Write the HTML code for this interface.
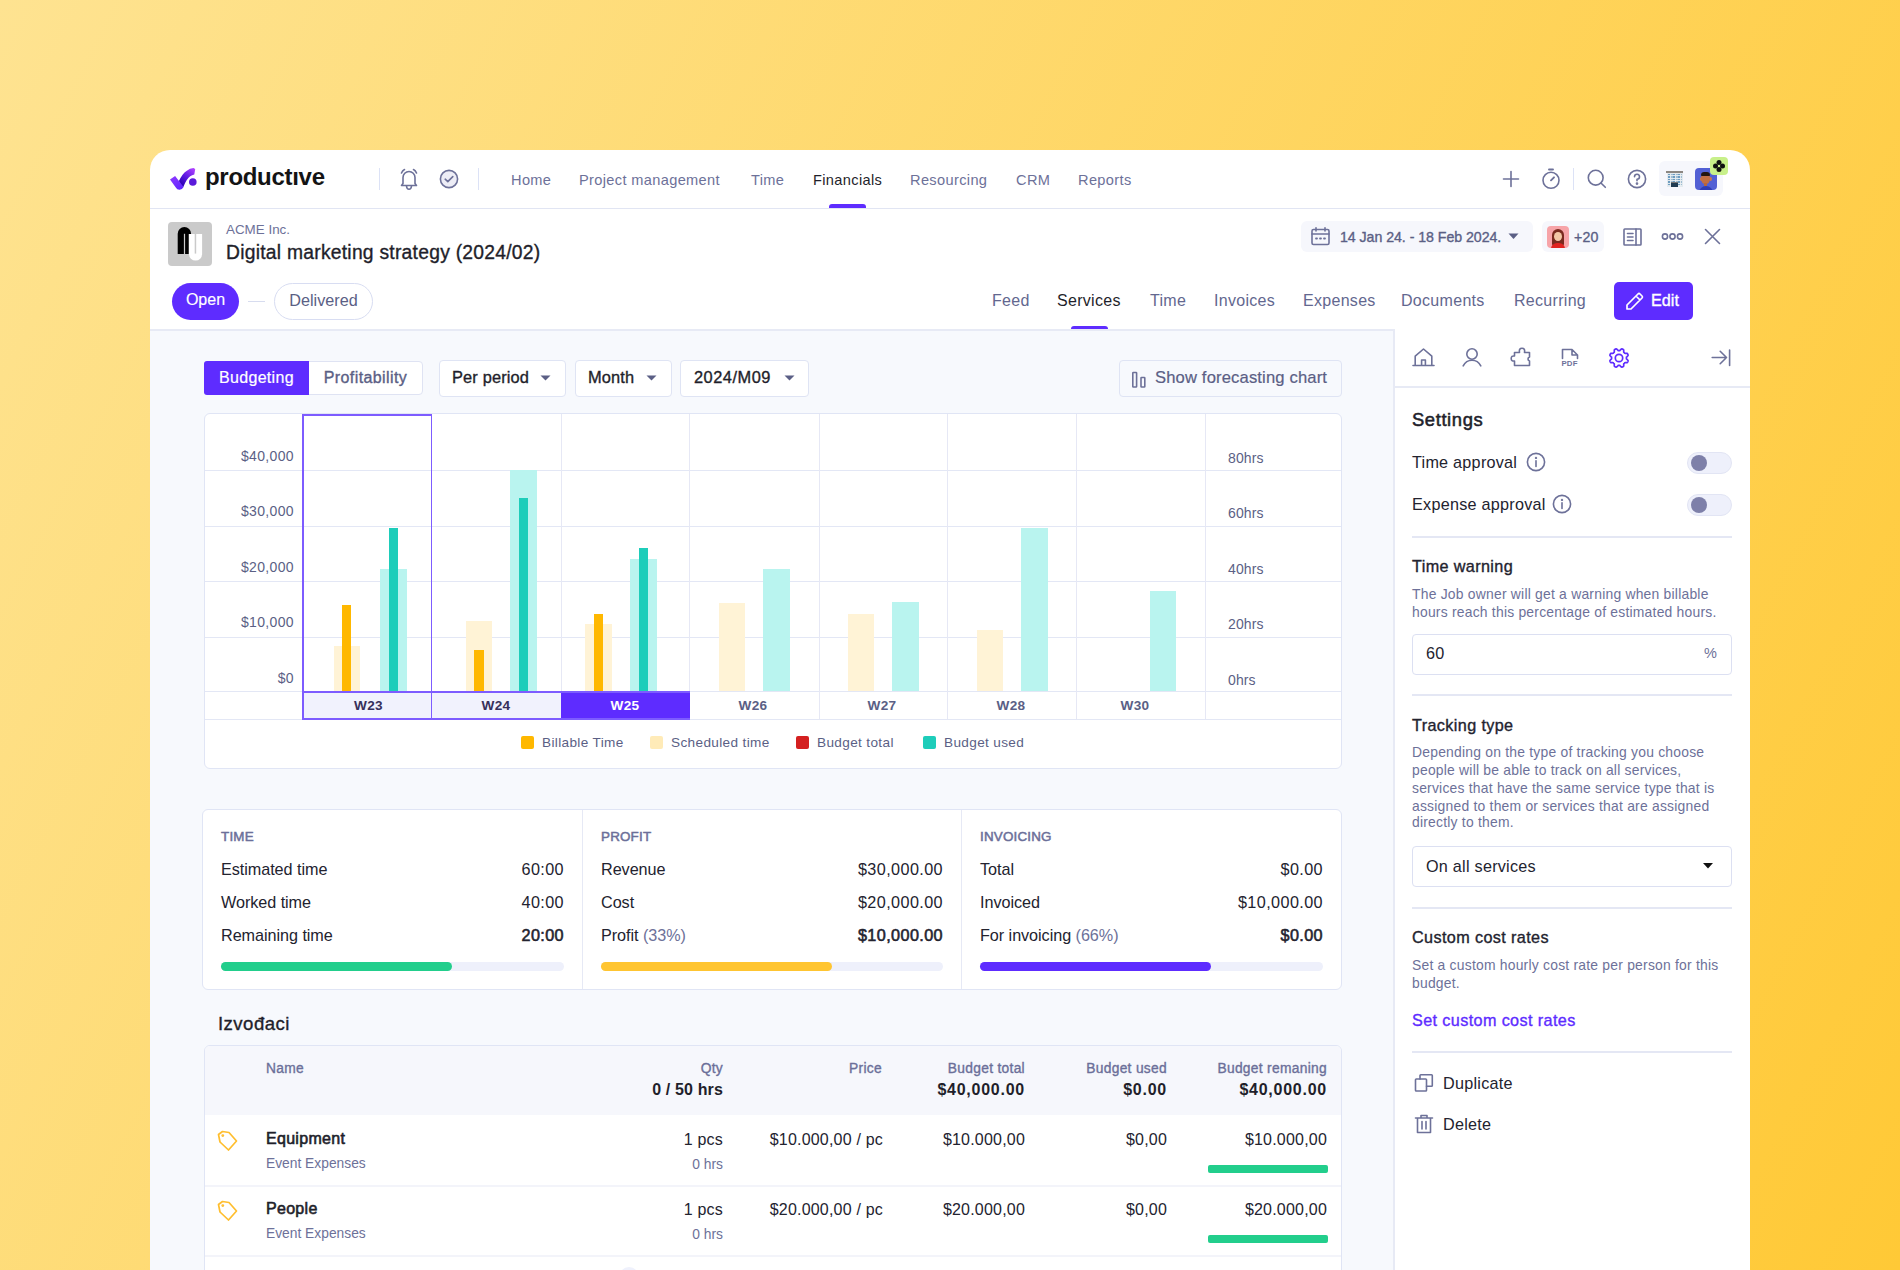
<!DOCTYPE html>
<html><head><meta charset="utf-8">
<style>
*{box-sizing:border-box;margin:0;padding:0}
html,body{width:1900px;height:1270px;overflow:hidden}
body{position:relative;font-family:"Liberation Sans",sans-serif;background:linear-gradient(117deg,#FEE391 0%,#FFC936 100%);color:#23232f}
.a{position:absolute}
.t{position:absolute;white-space:nowrap;line-height:20px}
.win{position:absolute;left:150px;top:150px;width:1600px;height:1140px;background:#fff;border-radius:20px 20px 0 0;overflow:hidden}
.nav{color:#6D7199;font-size:14.6px;letter-spacing:0.35px}

.g{color:#6D7199}
.line{position:absolute;background:#E4E8F4}
svg{position:absolute;overflow:visible}
.ic{fill:none;stroke:#6D7199;stroke-width:1.6;stroke-linecap:round;stroke-linejoin:round}
.md{-webkit-text-stroke:0.35px currentColor}
.tab{color:#63678F;font-size:16px;letter-spacing:0.3px;margin-top:1px}
.ylab{color:#5B5F85;font-size:14px;margin-top:-0.6px;letter-spacing:0.35px}
.wk{font-size:13.6px;font-weight:bold;letter-spacing:0.3px}
.leg{color:#5B5F85;font-size:13.6px;letter-spacing:0.35px;margin-top:1px}
.slab{color:#6B6F99;font-size:13.4px;letter-spacing:0.2px;-webkit-text-stroke:0.5px currentColor}
.srow{color:#23232F;font-size:16.2px;letter-spacing:-0.05px}
.sval{letter-spacing:0.4px}
.sb{-webkit-text-stroke:0.55px currentColor}
.th{color:#6B6F99;font-size:13.8px;letter-spacing:0.3px;-webkit-text-stroke:0.35px currentColor}
.tv{color:#1F1F2B;font-size:16px;font-weight:bold;letter-spacing:0.75px}
.tn{color:#1F1F2B;font-size:16px;letter-spacing:0.3px;-webkit-text-stroke:0.6px currentColor}
.tsub{color:#6D7199;font-size:13.8px}
.tc{color:#23232F;font-size:16px;letter-spacing:0.2px}
.rp{color:#23232F;font-size:16.2px;letter-spacing:0.25px}
.rp.md{letter-spacing:0.38px}
.rdesc{color:#6D7199;font-size:13.9px;line-height:18px;white-space:nowrap;letter-spacing:0.22px}
.t.dark{color:#1F1F2B}
.pill{position:absolute;border-radius:6px}
.card{position:absolute;background:#fff;border:1px solid #E0E5F5;border-radius:6px}
.btn{position:absolute;background:#fff;border:1px solid #DFE4F4;border-radius:4px}
</style></head><body>
<div class="win"></div>

<!-- ============ TOP NAV ============ -->
<svg style="left:165px;top:163px" width="36" height="30" viewBox="0 0 36 30">
 <defs>
  <linearGradient id="lg1" gradientUnits="userSpaceOnUse" x1="16" y1="22" x2="29" y2="6"><stop offset="0" stop-color="#2800B0"/><stop offset="0.45" stop-color="#5a18e0"/><stop offset="1" stop-color="#AE42FF"/></linearGradient>
  <linearGradient id="lg3" gradientUnits="userSpaceOnUse" x1="7" y1="14" x2="15" y2="27"><stop offset="0" stop-color="#8C38FF"/><stop offset="1" stop-color="#5F26FF"/></linearGradient>
 </defs>
 <path d="M13.9 18.1 Q17.5 10.5 21.5 8 Q25 5.2 28.5 5.1 L30.2 5.9 L29.3 11.6 Q27 12.4 25.2 13.3 Q22 15.2 18.3 24 L15.5 22 Z" fill="url(#lg1)"/>
 <path d="M5 16.4 L10.1 13.1 L18.6 24 Q17.2 26.7 14.6 26.7 Q12 26.8 10.8 24.5 Z" fill="url(#lg3)"/>
 <circle cx="27.8" cy="19" r="3.8" fill="#5A1ADA"/>
</svg>
<div class="t" style="left:205px;top:164px;font-size:24px;line-height:26px;font-weight:bold;letter-spacing:-0.3px;color:#141414">productıve</div>

<div class="line" style="left:379px;top:168px;width:1px;height:22px;background:#DCE2F6"></div>
<!-- bell -->
<svg class="ic" style="left:398px;top:167px" width="22" height="24" viewBox="0 0 22 24">
 <path d="M5 16.5 V10.5 A6 6 0 0 1 17 10.5 V16.5 L18.5 18.5 H3.5 Z"/><path d="M8.5 19 Q8.8 22.3 11 22.3 Q13.2 22.3 13.5 19"/><path d="M3.5 6 Q4.5 3.5 6.5 2.5"/><path d="M18.5 6 Q17.5 3.5 15.5 2.5"/>
</svg>
<!-- check circle -->
<svg class="ic" style="left:439px;top:169px" width="20" height="20" viewBox="0 0 20 20">
 <circle cx="10" cy="10" r="8.6" fill="#EDEDF6"/><path d="M6.2 10.2 L8.8 12.6 L13.8 7.6"/>
</svg>
<div class="line" style="left:478px;top:168px;width:1px;height:22px;background:#DCE2F6"></div>

<div class="t nav" style="left:511px;top:170px">Home</div>
<div class="t nav" style="left:579px;top:170px">Project management</div>
<div class="t nav" style="left:751px;top:170px">Time</div>
<div class="t nav dark" style="left:813px;top:170px">Financials</div>
<div class="t nav" style="left:910px;top:170px">Resourcing</div>
<div class="t nav" style="left:1016px;top:170px">CRM</div>
<div class="t nav" style="left:1078px;top:170px">Reports</div>
<div class="a" style="left:829px;top:204px;width:37px;height:5px;background:#5E2CFF;border-radius:3px 3px 0 0"></div>
<div class="line" style="left:150px;top:208px;width:1600px;height:1px;background:#E1E5F3"></div>

<!-- right icons -->
<svg class="ic" style="left:1501px;top:169px" width="20" height="20" viewBox="0 0 20 20"><path d="M10 2.5 V17.5 M2.5 10 H17.5"/></svg>
<svg class="ic" style="left:1541px;top:168px" width="20" height="22" viewBox="0 0 20 22"><circle cx="10" cy="12.3" r="8"/><path d="M8 1.5 H12 M10 12.3 L13 9.3" stroke-width="1.9"/></svg>
<div class="line" style="left:1573px;top:168px;width:1px;height:22px;background:#DCE2F6"></div>
<svg class="ic" style="left:1587px;top:169px" width="20" height="20" viewBox="0 0 20 20"><circle cx="8.7" cy="8.7" r="7.4"/><path d="M14.2 14.2 L18.3 18.3"/></svg>
<svg class="ic" style="left:1627px;top:169px" width="20" height="20" viewBox="0 0 20 20"><circle cx="10" cy="10" r="8.6"/><path d="M7.5 7.7 A2.5 2.5 0 1 1 10 10.3 V11.8"/><circle cx="10" cy="14.6" r="0.55" fill="#6D7199"/></svg>
<div class="pill" style="left:1659px;top:161px;width:64px;height:35px;background:#F6F7FC;border-radius:6px"></div>
<div class="a" style="left:1666px;top:171px;width:17px;height:16px">
 <div class="a" style="left:0;top:0;width:17px;height:2px;background:#8c8782"></div>
 <div class="a" style="left:0.5px;top:2px;width:16px;height:14px;background:#e4eaee"></div>
 <div class="a" style="left:1.5px;top:3px;width:14px;height:12px;background:repeating-linear-gradient(90deg,#6d9cc0 0 2px,#dfe7ec 2px 3px,#9fbdd3 3px 4.5px,#dfe7ec 4.5px 5px)"></div>
 <div class="a" style="left:1.5px;top:3px;width:14px;height:12px;background:repeating-linear-gradient(0deg,rgba(235,240,243,0.9) 0 1px,transparent 1px 2.5px)"></div>
 <div class="a" style="left:5px;top:11.3px;width:7px;height:4.7px;background:#1f3b52;border-top:1px solid #777"></div>
</div>
<div class="a" style="left:1694.5px;top:168px;width:22px;height:22px;background:#5260D4;border-radius:4px;overflow:hidden">
 <div class="a" style="left:5px;top:9px;width:3px;height:4px;border-radius:50%;background:#C9784A"></div>
 <div class="a" style="left:14px;top:9px;width:3px;height:4px;border-radius:50%;background:#C9784A"></div>
 <div class="a" style="left:6.5px;top:4.5px;width:9px;height:11.5px;border-radius:45%;background:#C26E42"></div>
 <div class="a" style="left:6.5px;top:4px;width:9px;height:4px;border-radius:4px 4px 1px 1px;background:#231510"></div>
 <div class="a" style="left:9.5px;top:15px;width:3px;height:3px;background:#B8653C"></div>
 <div class="a" style="left:4px;top:17.5px;width:14px;height:8px;border-radius:7px 7px 0 0;background:#2F3DB5"></div>
</div>
<div class="a" style="left:1710px;top:157px;width:18px;height:18px;background:#C8F08A;border-radius:4px"></div>
<svg style="left:1712px;top:159px" width="14" height="14" viewBox="0 0 14 14"><g fill="#111"><circle cx="7" cy="3.5" r="2.5"/><circle cx="7" cy="10.5" r="2.5"/><circle cx="3.5" cy="7" r="2.5"/><circle cx="10.5" cy="7" r="2.5"/></g></svg>


<!-- ============ SUB HEADER ============ -->
<div class="a" style="left:168px;top:222px;width:44px;height:44px;background:#CACACA;border-radius:4px"></div>
<svg style="left:168px;top:222px" width="44" height="44" viewBox="0 0 44 44">
 <path d="M9.7 32 V11.7 A6.7 6.7 0 0 1 23.1 11.7 V12 H20.7 V32 Z" fill="#000"/>
 <rect x="15.9" y="11.8" width="1.2" height="20.2" fill="#CACACA"/>
 <path d="M21 12 H34.1 V32 A6.55 6.55 0 0 1 21 32 Z" fill="#fff"/>
 <rect x="26.7" y="12" width="1.5" height="19.6" fill="#CACACA"/>
</svg>
<div class="t" style="left:226px;top:220px;font-size:13.4px;color:#6D7199">ACME Inc.</div>
<div class="t md" style="left:226px;top:243px;font-size:19.3px;line-height:20px;letter-spacing:0.25px;color:#1F1F2B">Digital marketing strategy (2024/02)</div>

<div class="pill" style="left:1301px;top:221px;width:232px;height:31px;background:#F6F7FC"></div>
<svg class="ic" style="left:1311px;top:227px" width="19" height="19" viewBox="0 0 19 19"><rect x="1" y="2.5" width="17" height="15" rx="1.5"/><path d="M1 7 H18 M5 0.8 V4 M14 0.8 V4"/><path d="M5 11.5 H6 M9 11.5 H10 M13 11.5 H14" stroke-width="1.8"/></svg>
<div class="t md" style="left:1340px;top:227px;font-size:14.2px;letter-spacing:-0.05px;color:#5B5F85">14 Jan 24. - 18 Feb 2024.</div>
<svg style="left:1508px;top:233px" width="11" height="7" viewBox="0 0 11 7"><path d="M0.5 0.5 H10.5 L5.5 6 Z" fill="#5B5F85"/></svg>
<div class="pill" style="left:1542px;top:221px;width:62px;height:31px;background:#F6F7FC"></div>
<div class="a" style="left:1547px;top:226px;width:22px;height:22px;background:#F7A4A8;border-radius:4px;overflow:hidden">
 <div class="a" style="left:5px;top:3px;width:12px;height:17px;background:#7A2A1E;border-radius:6px 6px 2px 2px"></div>
 <div class="a" style="left:7px;top:6px;width:8px;height:9px;background:#F2C7A5;border-radius:50%"></div>
 <div class="a" style="left:4px;top:17px;width:14px;height:6px;background:#E0231F;border-radius:6px 6px 0 0"></div>
</div>
<div class="t md" style="left:1574px;top:227px;font-size:14.2px;letter-spacing:0.2px;color:#5B5F85">+20</div>
<svg class="ic" style="left:1623px;top:228px" width="19" height="18" viewBox="0 0 19 18"><rect x="1" y="1" width="17" height="16" rx="0.8"/><path d="M13 1 V17 M4.5 5.5 H10 M4.5 9 H10 M4.5 12.5 H10"/></svg>
<svg class="ic" style="left:1661px;top:232px" width="23" height="9" viewBox="0 0 23 9"><circle cx="4" cy="4.5" r="2.6"/><circle cx="11.5" cy="4.5" r="2.6"/><circle cx="19" cy="4.5" r="2.6"/></svg>
<svg class="ic" style="left:1704px;top:228px" width="17" height="17" viewBox="0 0 17 17"><path d="M1.5 1.5 L15.5 15.5 M15.5 1.5 L1.5 15.5"/></svg>

<!-- status -->
<div class="a" style="left:172px;top:283px;width:67px;height:37px;background:#5E2CFF;border-radius:19px"></div>
<div class="t md" style="left:172px;top:290px;width:67px;text-align:center;font-size:16px;line-height:20px;color:#fff;-webkit-text-stroke:0.15px #fff">Open</div>
<div class="a" style="left:248px;top:301px;width:17px;height:1px;background:#D7DCEF"></div>
<div class="a" style="left:274px;top:283px;width:99px;height:37px;border:1px solid #D8DDF2;border-radius:19px"></div>
<div class="t" style="left:274px;top:290px;width:99px;text-align:center;font-size:16.2px;line-height:20px;color:#5B5F85">Delivered</div>

<!-- tabs -->
<div class="t tab" style="left:992px;top:290px">Feed</div>
<div class="t tab dark" style="left:1057px;top:290px">Services</div>
<div class="t tab" style="left:1150px;top:290px">Time</div>
<div class="t tab" style="left:1214px;top:290px">Invoices</div>
<div class="t tab" style="left:1303px;top:290px">Expenses</div>
<div class="t tab" style="left:1401px;top:290px">Documents</div>
<div class="t tab" style="left:1514px;top:290px">Recurring</div>
<div class="a" style="left:1071px;top:326px;width:37px;height:5px;background:#5E2CFF;border-radius:3px 3px 0 0"></div>
<div class="a" style="left:1614px;top:282px;width:79px;height:38px;background:#5E2CFF;border-radius:5px"></div>
<svg style="left:1625px;top:291px" width="20" height="20" viewBox="0 0 20 20" fill="none" stroke="#fff" stroke-width="1.7" stroke-linejoin="round"><path d="M2 14 L13 3 Q14 2 15 3 L17 5 Q18 6 17 7 L6 18 H2 Z M11 5 L15 9"/></svg>
<div class="t md" style="left:1651px;top:290px;font-size:16.2px;color:#fff">Edit</div>

<!-- main bg -->
<div class="a" style="left:150px;top:329px;width:1245px;height:2px;background:#E7EAF5"></div>
<div class="a" style="left:150px;top:331px;width:1244px;height:960px;background:#F7F9FD"></div>
<div class="a" style="left:1393px;top:329px;width:2px;height:960px;background:#E7EAF5"></div>


<!-- ============ TOOLBAR ============ -->
<div class="btn" style="left:204px;top:360.5px;width:219px;height:34px;border-color:#DFE3F3"></div>
<div class="a" style="left:204px;top:360.5px;width:105px;height:34px;background:#5E2CFF;border-radius:3px 0 0 3px"></div>
<div class="t" style="left:204px;top:367.5px;width:105px;text-align:center;font-size:16px;line-height:20px;letter-spacing:0.3px;color:#fff;-webkit-text-stroke:0.2px #fff">Budgeting</div>
<div class="t md" style="left:309px;top:367.5px;width:113px;text-align:center;font-size:16px;line-height:20px;letter-spacing:0.4px;color:#5B5F85">Profitability</div>
<div class="btn" style="left:439px;top:360px;width:127px;height:37px"></div>
<div class="t md" style="left:452px;top:367px;font-size:16.4px;letter-spacing:0.15px;color:#1F1F2B">Per period</div>
<div class="btn" style="left:575px;top:360px;width:97px;height:37px"></div>
<div class="t md" style="left:588px;top:367px;font-size:16.4px;letter-spacing:0.15px;color:#1F1F2B">Month</div>
<div class="btn" style="left:680px;top:360px;width:129px;height:37px"></div>
<div class="t md" style="left:694px;top:367px;font-size:16.4px;letter-spacing:0.5px;color:#1F1F2B">2024/M09</div>
<svg style="left:540px;top:375px" width="11" height="6" viewBox="0 0 11 6"><path d="M0.5 0.5 H10.5 L5.5 5.5 Z" fill="#5B5F85"/></svg>
<svg style="left:646px;top:375px" width="11" height="6" viewBox="0 0 11 6"><path d="M0.5 0.5 H10.5 L5.5 5.5 Z" fill="#5B5F85"/></svg>
<svg style="left:784px;top:375px" width="11" height="6" viewBox="0 0 11 6"><path d="M0.5 0.5 H10.5 L5.5 5.5 Z" fill="#5B5F85"/></svg>
<div class="btn" style="left:1119px;top:360px;width:223px;height:37px;background:transparent"></div>
<svg class="ic" style="left:1131px;top:370.5px" width="16" height="17" viewBox="0 0 16 17"><rect x="1.8" y="1.5" width="3.8" height="14.5" rx="0.6"/><rect x="10" y="6.5" width="3.8" height="9.5" rx="0.6"/></svg>
<div class="t" style="left:1155px;top:368px;font-size:16.6px;letter-spacing:0.15px;color:#5B5F85;-webkit-text-stroke:0.2px currentColor">Show forecasting chart</div>

<!-- ============ CHART ============ -->
<div class="card" style="left:204px;top:413px;width:1138px;height:356px"></div>

<div class="a" style="left:205px;top:470px;width:1136px;height:1px;background:#E3E7F5"></div>
<div class="a" style="left:205px;top:526px;width:1136px;height:1px;background:#E3E7F5"></div>
<div class="a" style="left:205px;top:581px;width:1136px;height:1px;background:#E3E7F5"></div>
<div class="a" style="left:205px;top:637px;width:1136px;height:1px;background:#E3E7F5"></div>
<div class="a" style="left:205px;top:691px;width:1136px;height:1px;background:#E3E7F5"></div>
<div class="a" style="left:205px;top:719px;width:1136px;height:1px;background:#E3E7F5"></div>
<div class="a" style="left:431px;top:414px;width:1px;height:305px;background:#E6E8F5"></div>
<div class="a" style="left:561px;top:414px;width:1px;height:305px;background:#E6E8F5"></div>
<div class="a" style="left:689px;top:414px;width:1px;height:305px;background:#E6E8F5"></div>
<div class="a" style="left:819px;top:414px;width:1px;height:305px;background:#E6E8F5"></div>
<div class="a" style="left:947px;top:414px;width:1px;height:305px;background:#E6E8F5"></div>
<div class="a" style="left:1076px;top:414px;width:1px;height:305px;background:#E6E8F5"></div>
<div class="a" style="left:1205px;top:414px;width:1px;height:305px;background:#E6E8F5"></div>
<div class="a" style="left:303px;top:691px;width:258px;height:28px;background:#F1F2FD"></div>
<div class="a" style="left:561px;top:691px;width:129px;height:28px;background:#5E2CFF"></div>
<div class="a" style="left:302px;top:691px;width:388px;height:1.5px;background:#7D5CFF"></div>
<div class="a" style="left:302px;top:718px;width:388px;height:1.5px;background:#7D5CFF"></div>
<div class="a" style="left:302px;top:414px;width:1.5px;height:305px;background:#7D5CFF"></div>
<div class="a" style="left:430.5px;top:414px;width:1.5px;height:305px;background:#7D5CFF"></div>
<div class="a" style="left:302px;top:414px;width:130px;height:1.5px;background:#7D5CFF"></div>
<div class="a" style="left:333.5px;top:646px;width:26.5px;height:45px;background:#FFF3D6"></div>
<div class="a" style="left:341.8px;top:605px;width:9.2px;height:86px;background:#FFB800"></div>
<div class="a" style="left:380.0px;top:569px;width:26.6px;height:122px;background:#B9F4EF"></div>
<div class="a" style="left:388.5px;top:528px;width:9.5px;height:163px;background:#1ECDBA"></div>
<div class="a" style="left:465.5px;top:621px;width:26.5px;height:70px;background:#FFF3D6"></div>
<div class="a" style="left:474.0px;top:650px;width:9.5px;height:41px;background:#FFB800"></div>
<div class="a" style="left:510.0px;top:470px;width:26.5px;height:221px;background:#B9F4EF"></div>
<div class="a" style="left:518.5px;top:498px;width:9.5px;height:193px;background:#1ECDBA"></div>
<div class="a" style="left:585.4px;top:624px;width:26.6px;height:67px;background:#FFF3D6"></div>
<div class="a" style="left:594.0px;top:614px;width:9.4px;height:77px;background:#FFB800"></div>
<div class="a" style="left:630.0px;top:559px;width:26.7px;height:132px;background:#B9F4EF"></div>
<div class="a" style="left:638.7px;top:547.5px;width:9.0px;height:143.5px;background:#1ECDBA"></div>
<div class="a" style="left:718.8px;top:603px;width:26.6px;height:88px;background:#FFF3D6"></div>
<div class="a" style="left:763.0px;top:569px;width:26.8px;height:122px;background:#B9F4EF"></div>
<div class="a" style="left:847.8px;top:614px;width:26.7px;height:77px;background:#FFF3D6"></div>
<div class="a" style="left:892.0px;top:602px;width:26.8px;height:89px;background:#B9F4EF"></div>
<div class="a" style="left:976.7px;top:630px;width:26.6px;height:61px;background:#FFF3D6"></div>
<div class="a" style="left:1021.0px;top:528px;width:26.7px;height:163px;background:#B9F4EF"></div>
<div class="a" style="left:1149.8px;top:591px;width:26.7px;height:100px;background:#B9F4EF"></div>
<div class="t ylab" style="left:200px;top:447px;width:94px;text-align:right">$40,000</div>
<div class="t ylab" style="left:200px;top:502px;width:94px;text-align:right">$30,000</div>
<div class="t ylab" style="left:200px;top:558px;width:94px;text-align:right">$20,000</div>
<div class="t ylab" style="left:200px;top:613px;width:94px;text-align:right">$10,000</div>
<div class="t ylab" style="left:200px;top:669px;width:94px;text-align:right">$0</div>
<div class="t ylab" style="left:1228px;top:447px;margin-top:1px;letter-spacing:0.1px">80hrs</div>
<div class="t ylab" style="left:1228px;top:502px;margin-top:1px;letter-spacing:0.1px">60hrs</div>
<div class="t ylab" style="left:1228px;top:558px;margin-top:1px;letter-spacing:0.1px">40hrs</div>
<div class="t ylab" style="left:1228px;top:613px;margin-top:1px;letter-spacing:0.1px">20hrs</div>
<div class="t ylab" style="left:1228px;top:669px;margin-top:1px;letter-spacing:0.1px">0hrs</div>
<div class="t wk" style="left:328.5px;top:696px;width:80px;text-align:center;color:#37305A">W23</div>
<div class="t wk" style="left:456px;top:696px;width:80px;text-align:center;color:#37305A">W24</div>
<div class="t wk" style="left:585px;top:696px;width:80px;text-align:center;color:#fff">W25</div>
<div class="t wk" style="left:713px;top:696px;width:80px;text-align:center;color:#5B5F85">W26</div>
<div class="t wk" style="left:842px;top:696px;width:80px;text-align:center;color:#5B5F85">W27</div>
<div class="t wk" style="left:971px;top:696px;width:80px;text-align:center;color:#5B5F85">W28</div>
<div class="t wk" style="left:1095px;top:696px;width:80px;text-align:center;color:#5B5F85">W30</div>
<div class="a" style="left:521px;top:736px;width:13px;height:13px;border-radius:2px;background:#FFB800"></div>
<div class="t leg" style="left:542px;top:732px">Billable Time</div>
<div class="a" style="left:650px;top:736px;width:13px;height:13px;border-radius:2px;background:#FFEBB8"></div>
<div class="t leg" style="left:671px;top:732px">Scheduled time</div>
<div class="a" style="left:796px;top:736px;width:13px;height:13px;border-radius:2px;background:#D42020"></div>
<div class="t leg" style="left:817px;top:732px">Budget total</div>
<div class="a" style="left:923px;top:736px;width:13px;height:13px;border-radius:2px;background:#1ECDBA"></div>
<div class="t leg" style="left:944px;top:732px">Budget used</div>

<!-- ============ STATS ============ -->
<div class="card" style="left:202px;top:809px;width:1140px;height:181px"></div>
<div class="a" style="left:582px;top:810px;width:1px;height:179px;background:#E6E9F5"></div>
<div class="a" style="left:961px;top:810px;width:1px;height:179px;background:#E6E9F5"></div>

<div class="t slab" style="left:221px;top:827px">TIME</div>
<div class="t srow" style="left:221px;top:858.8px">Estimated time</div>
<div class="t srow sval" style="left:364px;top:858.8px;width:200px;text-align:right">60:00</div>
<div class="t srow" style="left:221px;top:891.8px">Worked time</div>
<div class="t srow sval" style="left:364px;top:891.8px;width:200px;text-align:right">40:00</div>
<div class="t srow" style="left:221px;top:924.8px">Remaining time</div>
<div class="t srow sval sb" style="left:364px;top:924.8px;width:200px;text-align:right">20:00</div>
<div class="a" style="left:221px;top:962px;width:343px;height:9px;border-radius:5px;background:#EEF0FB"></div>
<div class="a" style="left:221px;top:962px;width:231px;height:9px;border-radius:5px;background:#22CE8C"></div>
<div class="t slab" style="left:601px;top:827px">PROFIT</div>
<div class="t srow" style="left:601px;top:858.8px">Revenue</div>
<div class="t srow sval" style="left:743px;top:858.8px;width:200px;text-align:right">$30,000.00</div>
<div class="t srow" style="left:601px;top:891.8px">Cost</div>
<div class="t srow sval" style="left:743px;top:891.8px;width:200px;text-align:right">$20,000.00</div>
<div class="t srow" style="left:601px;top:924.8px">Profit <span class=g>(33%)</span></div>
<div class="t srow sval sb" style="left:743px;top:924.8px;width:200px;text-align:right">$10,000.00</div>
<div class="a" style="left:601px;top:962px;width:342px;height:9px;border-radius:5px;background:#EEF0FB"></div>
<div class="a" style="left:601px;top:962px;width:231px;height:9px;border-radius:5px;background:#FFC531"></div>
<div class="t slab" style="left:980px;top:827px">INVOICING</div>
<div class="t srow" style="left:980px;top:858.8px">Total</div>
<div class="t srow sval" style="left:1123px;top:858.8px;width:200px;text-align:right">$0.00</div>
<div class="t srow" style="left:980px;top:891.8px">Invoiced</div>
<div class="t srow sval" style="left:1123px;top:891.8px;width:200px;text-align:right">$10,000.00</div>
<div class="t srow" style="left:980px;top:924.8px">For invoicing <span class=g>(66%)</span></div>
<div class="t srow sval sb" style="left:1123px;top:924.8px;width:200px;text-align:right">$0.00</div>
<div class="a" style="left:980px;top:962px;width:343px;height:9px;border-radius:5px;background:#EEF0FB"></div>
<div class="a" style="left:980px;top:962px;width:231px;height:9px;border-radius:5px;background:#5E2CFF"></div>

<!-- ============ TABLE ============ -->
<div class="t md" style="left:218px;top:1014px;font-size:18.6px;line-height:20px;letter-spacing:0.45px;color:#1F1F2B">Izvođaci</div>
<div class="card" style="left:204px;top:1045px;width:1138px;height:260px;border-radius:6px"></div>
<div class="a" style="left:205px;top:1046px;width:1136px;height:69px;background:#F6F7FC;border-radius:5px 5px 0 0"></div>
<div class="t th" style="left:266px;top:1059px">Name</div>

<div class="t th" style="left:523px;top:1059px;width:200px;text-align:right">Qty</div>
<div class="t tv" style="left:523px;top:1080px;width:200px;text-align:right;letter-spacing:0.15px">0 / 50 hrs</div>
<div class="t th" style="left:682px;top:1059px;width:200px;text-align:right">Price</div>
<div class="t th" style="left:825px;top:1059px;width:200px;text-align:right">Budget total</div>
<div class="t tv" style="left:825px;top:1080px;width:200px;text-align:right">$40,000.00</div>
<div class="t th" style="left:967px;top:1059px;width:200px;text-align:right">Budget used</div>
<div class="t tv" style="left:967px;top:1080px;width:200px;text-align:right">$0.00</div>
<div class="t th" style="left:1127px;top:1059px;width:200px;text-align:right">Budget remaning</div>
<div class="t tv" style="left:1127px;top:1080px;width:200px;text-align:right">$40,000.00</div>
<svg style="left:217px;top:1129.5px" width="22" height="22" viewBox="0 0 22 22" fill="none" stroke="#FFBE2E" stroke-width="1.7" stroke-linejoin="round"><path d="M1.5 4.5 L5.5 1.5 L12 2.5 L19.5 11 L11.5 20 L3 12 Z"/><circle cx="5.8" cy="5.6" r="0.6" fill="#FFBE2E"/></svg>
<div class="t tn" style="left:266px;top:1128.5px">Equipment</div>
<div class="t tsub" style="left:266px;top:1153.5px">Event Expenses</div>
<div class="t tc" style="left:523px;top:1129.5px;width:200px;text-align:right">1 pcs</div>
<div class="t tsub" style="left:523px;top:1154.5px;width:200px;text-align:right">0 hrs</div>
<div class="t tc" style="left:683px;top:1129.5px;width:200px;text-align:right">$10.000,00 / pc</div>
<div class="t tc" style="left:825px;top:1129.5px;width:200px;text-align:right">$10.000,00</div>
<div class="t tc" style="left:967px;top:1129.5px;width:200px;text-align:right">$0,00</div>
<div class="t tc" style="left:1127px;top:1129.5px;width:200px;text-align:right">$10.000,00</div>
<div class="a" style="left:1208px;top:1164.5px;width:120px;height:8px;border-radius:2px;background:#22CE8C"></div>
<div class="a" style="left:205px;top:1184.5px;width:1136px;height:2px;background:#F3F4FA"></div>
<svg style="left:217px;top:1199.5px" width="22" height="22" viewBox="0 0 22 22" fill="none" stroke="#FFBE2E" stroke-width="1.7" stroke-linejoin="round"><path d="M1.5 4.5 L5.5 1.5 L12 2.5 L19.5 11 L11.5 20 L3 12 Z"/><circle cx="5.8" cy="5.6" r="0.6" fill="#FFBE2E"/></svg>
<div class="t tn" style="left:266px;top:1198.5px">People</div>
<div class="t tsub" style="left:266px;top:1223.5px">Event Expenses</div>
<div class="t tc" style="left:523px;top:1199.5px;width:200px;text-align:right">1 pcs</div>
<div class="t tsub" style="left:523px;top:1224.5px;width:200px;text-align:right">0 hrs</div>
<div class="t tc" style="left:683px;top:1199.5px;width:200px;text-align:right">$20.000,00 / pc</div>
<div class="t tc" style="left:825px;top:1199.5px;width:200px;text-align:right">$20.000,00</div>
<div class="t tc" style="left:967px;top:1199.5px;width:200px;text-align:right">$0,00</div>
<div class="t tc" style="left:1127px;top:1199.5px;width:200px;text-align:right">$20.000,00</div>
<div class="a" style="left:1208px;top:1234.5px;width:120px;height:8px;border-radius:2px;background:#22CE8C"></div>
<div class="a" style="left:205px;top:1254.5px;width:1136px;height:2px;background:#F3F4FA"></div>
<div class="a" style="left:619px;top:1267px;width:20px;height:20px;border-radius:50%;background:#EFF1FC"></div>

<!-- ============ RIGHT PANEL ============ -->
<svg class="ic" style="left:1412px;top:348px" width="23" height="19" viewBox="0 0 23 19"><path d="M1 17.5 H22 M3.2 17.5 V8.2 L11.5 1 L19.8 8.2 V17.5 M9.6 17.5 V12 H13.4 V17.5"/></svg>
<svg class="ic" style="left:1462px;top:348px" width="20" height="19" viewBox="0 0 20 19"><circle cx="10" cy="6" r="5.2"/><path d="M1.2 17.8 Q4 12.2 10 12.2 Q16 12.2 18.8 17.8"/></svg>
<svg class="ic" style="left:1510px;top:347px" width="22" height="20" viewBox="0 0 22 20"><path d="M4.5 5.5 H9.5 Q8.8 1.2 12 1.2 Q15.2 1.2 14.5 5.5 H19.5 V10 Q18 10.5 18 12 Q18 13.5 19.5 14 V18.5 H4.5 V14 Q1.2 14.5 1.2 11.5 Q1.2 8.5 4.5 9 Z"/></svg>
<svg class="ic" style="left:1561px;top:348px" width="18" height="12" viewBox="0 0 18 12"><path d="M1.5 10.5 V1.5 H11 L16.5 7 V10.5 M11 1.5 V7 H16.5"/></svg>
<div class="t" style="left:1561.5px;top:357.5px;font-size:7.8px;line-height:12px;font-weight:bold;color:#6D7199;letter-spacing:0.15px">PDF</div>
<svg style="left:1606.7px;top:345.6px" width="24" height="24" viewBox="0 0 24 24" fill="none" stroke="#5E2CFF" stroke-width="1.7" stroke-linejoin="round"><path d="M12.00 4.55 L12.26 4.55 L12.52 4.57 L12.78 4.59 L13.09 4.27 L13.43 3.90 L13.80 3.52 L14.20 3.18 L14.61 2.90 L14.95 2.92 L15.27 3.03 L15.58 3.15 L15.88 3.28 L16.19 3.42 L16.48 3.57 L16.64 3.96 L16.71 4.47 L16.72 5.00 L16.71 5.52 L16.69 6.00 L16.79 6.29 L16.99 6.46 L17.18 6.64 L17.36 6.82 L17.54 7.01 L17.71 7.21 L18.00 7.31 L18.48 7.29 L19.00 7.28 L19.53 7.29 L20.04 7.36 L20.43 7.52 L20.58 7.81 L20.72 8.12 L20.85 8.42 L20.97 8.73 L21.08 9.05 L21.10 9.39 L20.82 9.80 L20.48 10.20 L20.10 10.57 L19.73 10.91 L19.41 11.22 L19.43 11.48 L19.45 11.74 L19.45 12.00 L19.45 12.26 L19.43 12.52 L19.41 12.78 L19.73 13.09 L20.10 13.43 L20.48 13.80 L20.82 14.20 L21.10 14.61 L21.08 14.95 L20.97 15.27 L20.85 15.58 L20.72 15.88 L20.58 16.19 L20.43 16.48 L20.04 16.64 L19.53 16.71 L19.00 16.72 L18.48 16.71 L18.00 16.69 L17.71 16.79 L17.54 16.99 L17.36 17.18 L17.18 17.36 L16.99 17.54 L16.79 17.71 L16.69 18.00 L16.71 18.48 L16.72 19.00 L16.71 19.53 L16.64 20.04 L16.48 20.43 L16.19 20.58 L15.88 20.72 L15.58 20.85 L15.27 20.97 L14.95 21.08 L14.61 21.10 L14.20 20.82 L13.80 20.48 L13.43 20.10 L13.09 19.73 L12.78 19.41 L12.52 19.43 L12.26 19.45 L12.00 19.45 L11.74 19.45 L11.48 19.43 L11.22 19.41 L10.91 19.73 L10.57 20.10 L10.20 20.48 L9.80 20.82 L9.39 21.10 L9.05 21.08 L8.73 20.97 L8.42 20.85 L8.12 20.72 L7.81 20.58 L7.52 20.43 L7.36 20.04 L7.29 19.53 L7.28 19.00 L7.29 18.48 L7.31 18.00 L7.21 17.71 L7.01 17.54 L6.82 17.36 L6.64 17.18 L6.46 16.99 L6.29 16.79 L6.00 16.69 L5.52 16.71 L5.00 16.72 L4.47 16.71 L3.96 16.64 L3.57 16.48 L3.42 16.19 L3.28 15.88 L3.15 15.58 L3.03 15.27 L2.92 14.95 L2.90 14.61 L3.18 14.20 L3.52 13.80 L3.90 13.43 L4.27 13.09 L4.59 12.78 L4.57 12.52 L4.55 12.26 L4.55 12.00 L4.55 11.74 L4.57 11.48 L4.59 11.22 L4.27 10.91 L3.90 10.57 L3.52 10.20 L3.18 9.80 L2.90 9.39 L2.92 9.05 L3.03 8.73 L3.15 8.42 L3.28 8.12 L3.42 7.81 L3.57 7.52 L3.96 7.36 L4.47 7.29 L5.00 7.28 L5.52 7.29 L6.00 7.31 L6.29 7.21 L6.46 7.01 L6.64 6.82 L6.82 6.64 L7.01 6.46 L7.21 6.29 L7.31 6.00 L7.29 5.52 L7.28 5.00 L7.29 4.47 L7.36 3.96 L7.52 3.57 L7.81 3.42 L8.12 3.28 L8.42 3.15 L8.73 3.03 L9.05 2.92 L9.39 2.90 L9.80 3.18 L10.20 3.52 L10.57 3.90 L10.91 4.27 L11.22 4.59 L11.48 4.57 L11.74 4.55 Z"/><circle cx="12" cy="12" r="3.7"/></svg>
<svg class="ic" style="left:1711px;top:349px" width="20" height="18" viewBox="0 0 20 18"><path d="M1.2 8.5 H15.5 M9.2 2.3 L15.5 8.5 L9.2 14.7 M18.6 1 V16.5"/></svg>
<div class="a" style="left:1395px;top:386px;width:355px;height:1.5px;background:#E7EAF5"></div>

<div class="t sb" style="left:1412px;top:410px;font-size:18.4px;line-height:20px;letter-spacing:0.6px;color:#1F1F2B">Settings</div>
<div class="t rp" style="left:1412px;top:452px">Time approval</div>
<svg class="ic" style="left:1526px;top:452px" width="20" height="20" viewBox="0 0 20 20" stroke-width="1.4"><circle cx="10" cy="10" r="8.6"/><path d="M10 8.8 V14.5"/><circle cx="10" cy="5.9" r="0.4" fill="#6D7199"/></svg>
<div class="a" style="left:1687px;top:452px;width:45px;height:22px;border-radius:11px;background:#EEF0FB;border:1px solid #E2E5F4"></div>
<div class="a" style="left:1691px;top:455px;width:16px;height:16px;border-radius:50%;background:#7E80A9"></div>
<div class="t rp" style="left:1412px;top:494px">Expense approval</div>
<svg class="ic" style="left:1552px;top:494px" width="20" height="20" viewBox="0 0 20 20" stroke-width="1.4"><circle cx="10" cy="10" r="8.6"/><path d="M10 8.8 V14.5"/><circle cx="10" cy="5.9" r="0.4" fill="#6D7199"/></svg>
<div class="a" style="left:1687px;top:494px;width:45px;height:22px;border-radius:11px;background:#EEF0FB;border:1px solid #E2E5F4"></div>
<div class="a" style="left:1691px;top:497px;width:16px;height:16px;border-radius:50%;background:#7E80A9"></div>
<div class="a" style="left:1412px;top:536px;width:320px;height:1.5px;background:#E4E7F4"></div>

<div class="t rp md" style="left:1412px;top:556px">Time warning</div>
<div class="a rdesc" style="left:1412px;top:585px;width:330px">The Job owner will get a warning when billable<br>hours reach this percentage of estimated hours.</div>
<div class="a" style="left:1412px;top:634px;width:320px;height:41px;border:1px solid #DCE0F2;border-radius:4px;background:#fff"></div>
<div class="t rp" style="left:1426px;top:643px">60</div>
<div class="t" style="left:1704px;top:643px;font-size:14.5px;color:#6D7199">%</div>
<div class="a" style="left:1412px;top:694px;width:320px;height:1.5px;background:#E4E7F4"></div>

<div class="t rp md" style="left:1412px;top:715px">Tracking type</div>
<div class="a rdesc" style="left:1412px;top:743px;width:330px">Depending on the type of tracking you choose<br>people will be able to track on all services,<br>services that have the same service type that is<br>assigned to them or services that are assigned<br><span style="position:relative;top:-2px">directly to them.</span></div>
<div class="a" style="left:1412px;top:846px;width:320px;height:41px;border:1px solid #DCE0F2;border-radius:4px;background:#fff"></div>
<div class="t rp" style="left:1426px;top:856px">On all services</div>
<svg style="left:1703px;top:863px" width="10" height="6" viewBox="0 0 10 6"><path d="M0 0 H10 L5 5.5 Z" fill="#111"/></svg>
<div class="a" style="left:1412px;top:907px;width:320px;height:1.5px;background:#E4E7F4"></div>

<div class="t rp md" style="left:1412px;top:927px">Custom cost rates</div>
<div class="a rdesc" style="left:1412px;top:956px;width:330px">Set a custom hourly cost rate per person for this<br>budget.</div>
<div class="t rp md" style="left:1412px;top:1010px;color:#5E2CFF">Set custom cost rates</div>
<div class="a" style="left:1412px;top:1051px;width:320px;height:1.5px;background:#E4E7F4"></div>

<svg class="ic" style="left:1414px;top:1073px" width="20" height="20" viewBox="0 0 20 20" stroke-width="1.5"><rect x="1.5" y="6" width="11" height="12" rx="0.8"/><path d="M6 6 V2.5 Q6 1.8 6.8 1.8 H17.5 Q18.3 1.8 18.3 2.5 V12.5 Q18.3 13.3 17.5 13.3 H12.5"/></svg>
<div class="t rp" style="left:1443px;top:1073px">Duplicate</div>
<svg class="ic" style="left:1414px;top:1114px" width="20" height="20" viewBox="0 0 20 20" stroke-width="1.5"><path d="M1.5 4 H18.5 M7 4 V1.5 H13 V4 M3.5 4 V18.5 H16.5 V4 M8 7.5 V15 M12 7.5 V15"/></svg>
<div class="t rp" style="left:1443px;top:1114px">Delete</div>

</body></html>
